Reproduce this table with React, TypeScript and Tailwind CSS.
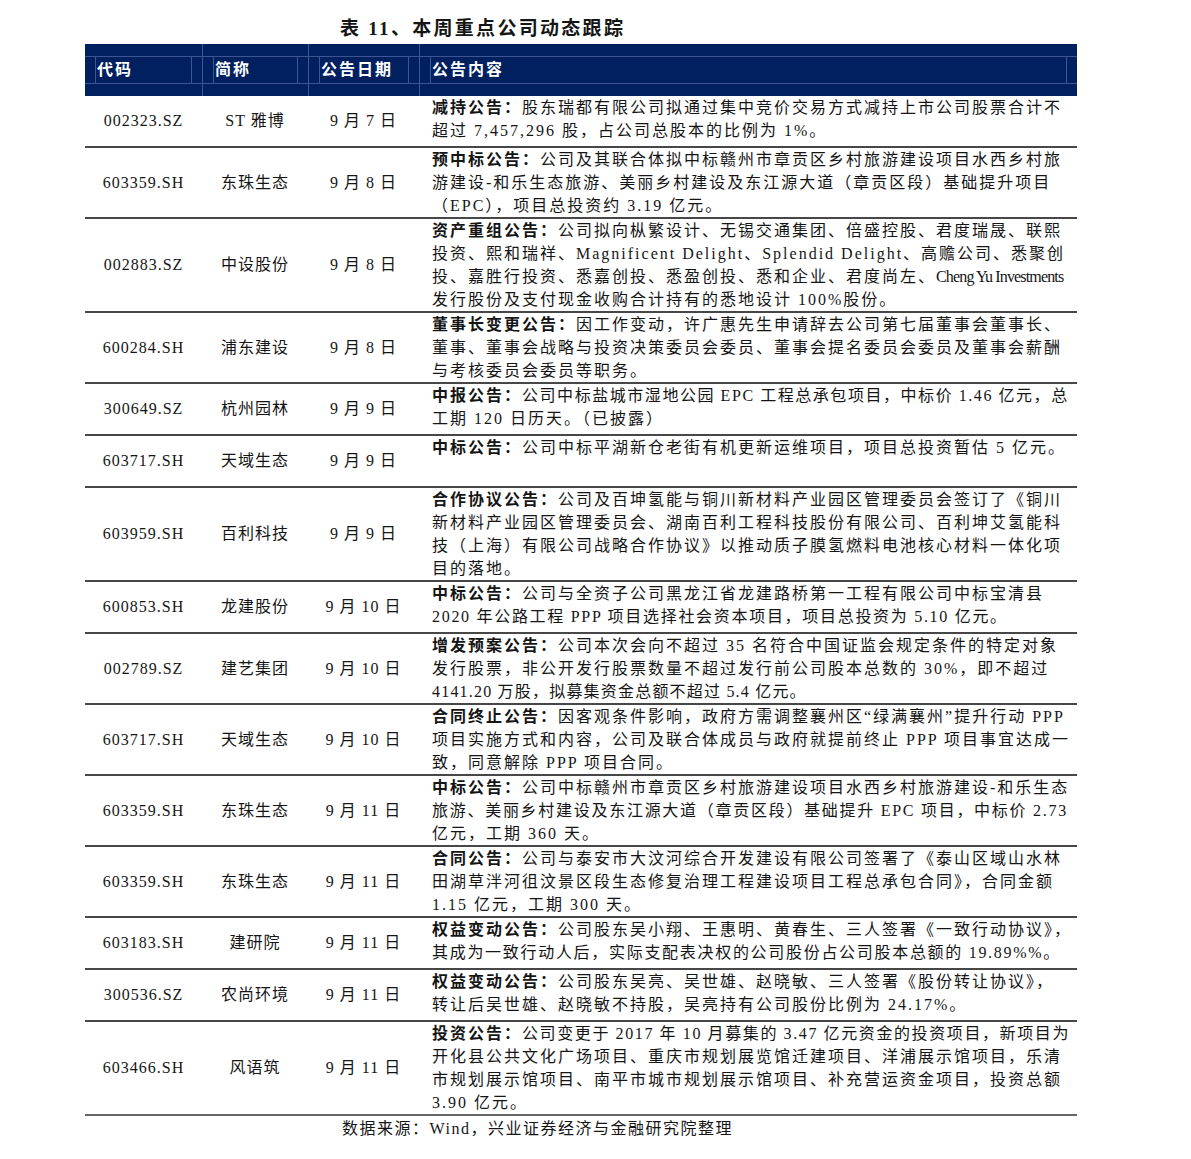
import React from "react";

type Line = React.ReactNode | { t: React.ReactNode; c: string };

type Row = {
  code: string;
  name: string;
  date: string;
  label: string;
  lines: Line[];
};

const rows: Row[] = [
  {
    code: "002323.SZ",
    name: "ST 雅博",
    date: "9 月 7 日",
    label: "减持公告：",
    lines: [
      "股东瑞都有限公司拟通过集中竞价交易方式减持上市公司股票合计不",
      "超过 7,457,296 股，占公司总股本的比例为 1%。",
    ],
  },
  {
    code: "603359.SH",
    name: "东珠生态",
    date: "9 月 8 日",
    label: "预中标公告：",
    lines: [
      "公司及其联合体拟中标赣州市章贡区乡村旅游建设项目水西乡村旅",
      "游建设-和乐生态旅游、美丽乡村建设及东江源大道（章贡区段）基础提升项目",
      "（EPC），项目总投资约 3.19 亿元。",
    ],
  },
  {
    code: "002883.SZ",
    name: "中设股份",
    date: "9 月 8 日",
    label: "资产重组公告：",
    lines: [
      "公司拟向枞繁设计、无锡交通集团、倍盛控股、君度瑞晟、联熙",
      "投资、熙和瑞祥、Magnificent Delight、Splendid Delight、高赡公司、悉聚创",
      <>
        投、嘉胜行投资、悉嘉创投、悉盈创投、悉和企业、君度尚左、
        <span className="tracking-[-0.85px]">Cheng Yu Investments</span>
      </>,
      "发行股份及支付现金收购合计持有的悉地设计 100%股份。",
    ],
  },
  {
    code: "600284.SH",
    name: "浦东建设",
    date: "9 月 8 日",
    label: "董事长变更公告：",
    lines: [
      "因工作变动，许广惠先生申请辞去公司第七届董事会董事长、",
      "董事、董事会战略与投资决策委员会委员、董事会提名委员会委员及董事会薪酬",
      "与考核委员会委员等职务。",
    ],
  },
  {
    code: "300649.SZ",
    name: "杭州园林",
    date: "9 月 9 日",
    label: "中报公告：",
    lines: [
      {
        t: "公司中标盐城市湿地公园 EPC 工程总承包项目，中标价 1.46 亿元，总",
        c: "tracking-[1.55px]",
      },
      "工期 120 日历天。（已披露）",
    ],
  },
  {
    code: "603717.SH",
    name: "天域生态",
    date: "9 月 9 日",
    label: "中标公告：",
    lines: ["公司中标平湖新仓老街有机更新运维项目，项目总投资暂估 5 亿元。"],
  },
  {
    code: "603959.SH",
    name: "百利科技",
    date: "9 月 9 日",
    label: "合作协议公告：",
    lines: [
      "公司及百坤氢能与铜川新材料产业园区管理委员会签订了《铜川",
      "新材料产业园区管理委员会、湖南百利工程科技股份有限公司、百利坤艾氢能科",
      "技（上海）有限公司战略合作协议》以推动质子膜氢燃料电池核心材料一体化项",
      "目的落地。",
    ],
  },
  {
    code: "600853.SH",
    name: "龙建股份",
    date: "9 月 10 日",
    label: "中标公告：",
    lines: [
      "公司与全资子公司黑龙江省龙建路桥第一工程有限公司中标宝清县",
      {
        t: "2020 年公路工程 PPP 项目选择社会资本项目，项目总投资为 5.10 亿元。",
        c: "tracking-[1.7px]",
      },
    ],
  },
  {
    code: "002789.SZ",
    name: "建艺集团",
    date: "9 月 10 日",
    label: "增发预案公告：",
    lines: [
      "公司本次会向不超过 35 名符合中国证监会规定条件的特定对象",
      "发行股票，非公开发行股票数量不超过发行前公司股本总数的 30%，即不超过",
      {
        t: "4141.20 万股，拟募集资金总额不超过 5.4 亿元。",
        c: "tracking-[1.2px]",
      },
    ],
  },
  {
    code: "603717.SH",
    name: "天域生态",
    date: "9 月 10 日",
    label: "合同终止公告：",
    lines: [
      "因客观条件影响，政府方需调整襄州区“绿满襄州”提升行动 PPP",
      "项目实施方式和内容，公司及联合体成员与政府就提前终止 PPP 项目事宜达成一",
      "致，同意解除 PPP 项目合同。",
    ],
  },
  {
    code: "603359.SH",
    name: "东珠生态",
    date: "9 月 11 日",
    label: "中标公告：",
    lines: [
      "公司中标赣州市章贡区乡村旅游建设项目水西乡村旅游建设-和乐生态",
      {
        t: "旅游、美丽乡村建设及东江源大道（章贡区段）基础提升 EPC 项目，中标价 2.73",
        c: "tracking-[1.72px]",
      },
      "亿元，工期 360 天。",
    ],
  },
  {
    code: "603359.SH",
    name: "东珠生态",
    date: "9 月 11 日",
    label: "合同公告：",
    lines: [
      "公司与泰安市大汶河综合开发建设有限公司签署了《泰山区域山水林",
      "田湖草泮河徂汶景区段生态修复治理工程建设项目工程总承包合同》，合同金额",
      "1.15 亿元，工期 300 天。",
    ],
  },
  {
    code: "603183.SH",
    name: "建研院",
    date: "9 月 11 日",
    label: "权益变动公告：",
    lines: [
      "公司股东吴小翔、王惠明、黄春生、三人签署《一致行动协议》，",
      {
        t: "其成为一致行动人后，实际支配表决权的公司股份占公司股本总额的 19.89%%。",
        c: "tracking-[1.7px]",
      },
    ],
  },
  {
    code: "300536.SZ",
    name: "农尚环境",
    date: "9 月 11 日",
    label: "权益变动公告：",
    lines: [
      "公司股东吴亮、吴世雄、赵晓敏、三人签署《股份转让协议》，",
      "转让后吴世雄、赵晓敏不持股，吴亮持有公司股份比例为 24.17%。",
    ],
  },
  {
    code: "603466.SH",
    name: "风语筑",
    date: "9 月 11 日",
    label: "投资公告：",
    lines: [
      {
        t: "公司变更于 2017 年 10 月募集的 3.47 亿元资金的投资项目，新项目为",
        c: "tracking-[1.6px]",
      },
      "开化县公共文化广场项目、重庆市规划展览馆迁建项目、洋浦展示馆项目，乐清",
      "市规划展示馆项目、南平市城市规划展示馆项目、补充营运资金项目，投资总额",
      "3.90 亿元。",
    ],
  },
];

const heads = ["代码", "简称", "公告日期", "公告内容"];

function isObj(l: Line): l is { t: React.ReactNode; c: string } {
  return (
    typeof l === "object" &&
    l !== null &&
    !React.isValidElement(l) &&
    "t" in (l as object)
  );
}

export default function App() {
  return (
    <div className="w-[1191px] min-h-[1159px] bg-white text-[#151515] font-['Liberation_Serif','Noto_Sans_CJK_SC',serif]">
      <div className="ml-[85px] w-[992px]">
        <div className="pt-[17px] pb-[3px] pl-[255px] text-[19px] leading-[24px] font-bold tracking-[2.3px] whitespace-nowrap">
          表 11、本周重点公司动态跟踪
        </div>

        <div className="grid grid-cols-[117px_106px_111px_658px] h-[52px] bg-[#002060]">
          {heads.map((h, i) => (
            <div
              key={h}
              className={
                i === 0 ? "pt-[12px]" : "pt-[12px] border-l border-[#3d5591]"
              }
            >
              <div className="h-[28px] border-y border-[#3d5591]">
                <div className="mx-[10px] h-full border-x border-[#3d5591] pl-px text-white font-bold text-[16px] leading-[26px] tracking-[2px] whitespace-nowrap">
                  {h}
                </div>
              </div>
            </div>
          ))}
        </div>

        {rows.map((r, idx) => (
          <div
            key={idx}
            className={
              idx === rows.length - 1
                ? "grid grid-cols-[117px_106px_111px_658px] border-b-2 border-[#666666]"
                : "grid grid-cols-[117px_106px_111px_658px] border-b-2 border-[#474747]"
            }
          >
            <div className="flex items-center justify-center text-[16px] tracking-[1px] whitespace-nowrap">
              {r.code}
            </div>
            <div className="flex items-center justify-center text-[16px] tracking-[1px] whitespace-nowrap">
              {r.name}
            </div>
            <div className="flex items-center justify-center text-[16px] tracking-[1px] whitespace-nowrap">
              {r.date}
            </div>
            <div className="pl-[13px] min-h-[50px] text-[16px] leading-[23px] tracking-[2px] whitespace-nowrap">
              {r.lines.map((l, j) => {
                const obj = isObj(l);
                const content = obj ? l.t : (l as React.ReactNode);
                return (
                  <div key={j} className={obj ? l.c : ""}>
                    {j === 0 && (
                      <span className="font-bold tracking-[2px]">{r.label}</span>
                    )}
                    {content}
                  </div>
                );
              })}
            </div>
          </div>
        ))}

        <div className="pl-[257px] pt-px text-[16px] leading-[24px] tracking-[1.5px] whitespace-nowrap">
          数据来源：Wind，兴业证券经济与金融研究院整理
        </div>
      </div>
    </div>
  );
}
